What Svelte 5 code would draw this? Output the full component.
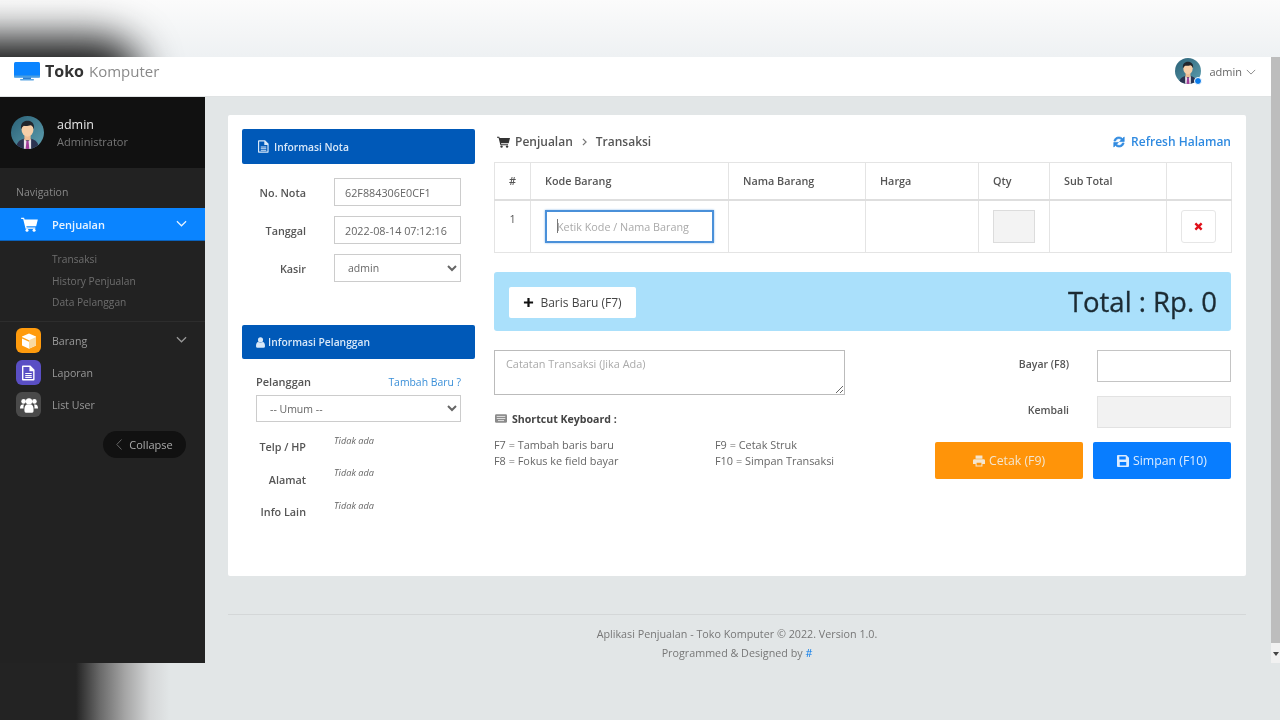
<script>
	const subMenu = ['Transaksi', 'History Penjualan', 'Data Pelanggan'];
	const shortcutsLeft = ['F7 = Tambah baris baru', 'F8 = Fokus ke field bayar'];
	const shortcutsRight = ['F9 = Cetak Struk', 'F10 = Simpan Transaksi'];
	const columns = ['#', 'Kode Barang', 'Nama Barang', 'Harga', 'Qty', 'Sub Total', ''];
	const customerInfo = ['Telp / HP', 'Alamat', 'Info Lain'];
</script>

{#snippet avatar(cls)}
	<svg class={cls} viewBox="0 0 32 32">
		<defs>
			<linearGradient id="av-{cls}" x1="0" y1="0" x2="1" y2="1">
				<stop offset="0" stop-color="#2a6076" />
				<stop offset="1" stop-color="#5fa0b0" />
			</linearGradient>
			<clipPath id="clip-{cls}"><circle cx="16" cy="16" r="16" /></clipPath>
		</defs>
		<circle cx="16" cy="16" r="16" fill="url(#av-{cls})" />
		<g clip-path="url(#clip-{cls})">
			<path d="M5 32c0-6 3-9 7.500-10h7c4.500 1 7.500 4 7.500 10z" fill="#2b3350" />
			<path d="M12.500 22l3.500 3 3.500-3v10h-7z" fill="#e9e4ea" />
			<path d="M15 24h2l.8 8h-3.600z" fill="#a13d9a" />
			<rect x="13" y="17" width="6" height="6.500" fill="#eebd95" />
			<ellipse cx="16" cy="13" rx="5.800" ry="7" fill="#f7cfa8" />
			<path d="M9.800 13c-.9-6 2.200-8.500 6.200-8.500s7.100 2.500 6.200 8.500c-.5-2-1.500-3.500-3.200-4-2 .8-5.500.8-6.500.5-1.200.8-2.200 2-2.700 3.500z" fill="#22262c" />
		</g>
	</svg>
{/snippet}

{#snippet cart(cls)}
	<svg class={cls} viewBox="0 0 20 18" fill="currentColor">
		<path d="M0 1h3.500l.6 2H20l-2 8H6.200l.4 1.500H17V14H5.300L2.400 2.500H0z" />
		<circle cx="7" cy="16" r="1.800" />
		<circle cx="15.500" cy="16" r="1.800" />
	</svg>
{/snippet}

{#snippet fileIcon(cls)}
	<svg class={cls} viewBox="0 0 14 16" fill="currentColor">
		<path fill-rule="evenodd" d="M1 0h8l4.500 4.500V15a1 1 0 0 1-1 1H1a1 1 0 0 1-1-1V1a1 1 0 0 1 1-1zm.5 1.500v13h10.500V6H8V1.500zM3.500 8h7v1.200h-7zm0 2.200h7v1.200h-7zm0 2.200h7v1.100h-7z" />
	</svg>
{/snippet}

<div class="page">
	<div class="top-shade"></div>

	<div class="window">
		<div class="viewport">
			<header class="topbar">
				<div class="brand">
					<svg class="monitor" viewBox="0 0 26 19">
						<rect x="0" y="0" width="26" height="15.500" rx="1.500" fill="#0a84ff" />
						<rect x="0" y="13.500" width="26" height="2" fill="#4a9ee0" />
						<rect x="9" y="15.500" width="8" height="2" fill="#2b7fd0" />
						<rect x="6" y="17" width="14" height="1.500" rx=".7" fill="#5aa5e4" />
					</svg>
					<span class="brand-bold">Toko</span>
					<span class="brand-light">Komputer</span>
				</div>
				<div class="account">
					<span class="account-pic">
						{@render avatar('avatar-sm')}
						<span class="dot"></span>
					</span>
					<span class="account-name">admin</span>
					<svg class="chev-top" viewBox="0 0 12 7"><path d="M1 1l5 5 5-5" /></svg>
				</div>
			</header>

			<div class="body">
				<aside class="sidebar">
					<div class="profile">
						{@render avatar('avatar-lg')}
						<div class="profile-text">
							<div class="profile-name">admin</div>
							<div class="profile-role">Administrator</div>
						</div>
					</div>

					<div class="nav-title">Navigation</div>

					<div class="nav-active">
						{@render cart('nav-cart')}
						<span>Penjualan</span>
						<svg class="chev" viewBox="0 0 12 7"><path d="M1 1l5 5 5-5" /></svg>
					</div>

					<ul class="sub-menu">
						{#each subMenu as item}
							<li>{item}</li>
						{/each}
					</ul>

					<div class="nav-list">
						<div class="nav-item">
							<span class="tile orange">
								<svg viewBox="0 0 18 18">
									<path d="M9 1.500l7 3v9l-7 3.200-7-3.200v-9z" fill="#fff" />
									<path d="M9 8.200l7-3.200v8.500l-7 3.200z" fill="#f9d9a0" />
									<path d="M9 8.200L2 5v1.500l7 3.200z" fill="#ffa31a" />
								</svg>
							</span>
							<span>Barang</span>
							<svg class="chev" viewBox="0 0 12 7"><path d="M1 1l5 5 5-5" /></svg>
						</div>
						<div class="nav-item">
							<span class="tile purple">{@render fileIcon('tile-file')}</span>
							<span>Laporan</span>
						</div>
						<div class="nav-item">
							<span class="tile grey">
								<svg viewBox="0 0 20 18" fill="#fff">
									<circle cx="4" cy="5" r="2.600" />
									<circle cx="16" cy="5" r="2.600" />
									<circle cx="10" cy="5" r="3.500" />
									<path d="M0 13c0-3 1-4.500 3-4.500h1.500C3.800 10 3.800 11.500 4 13zM20 13c0-3-1-4.500-3-4.500h-1.500c.7 1.500.7 3 .5 4.500z" />
									<path d="M5 16c-.5-5 1-7.500 3-7.500h4c2 0 3.500 2.500 3 7.500a1.500 1.500 0 0 1-1.500 1.500h-7A1.500 1.500 0 0 1 5 16z" />
								</svg>
							</span>
							<span>List User</span>
						</div>
					</div>

					<div class="collapse-row">
						<div class="collapse">
							<svg viewBox="0 0 6 11"><path d="M5.500 .5L.8 5.500l4.700 5" /></svg>
							Collapse
						</div>
					</div>
				</aside>

				<main class="content">
					<section class="card">
						<div class="col-left">
							<div class="panel-head">
								{@render fileIcon('head-file')}
								<span>Informasi Nota</span>
							</div>
							<div class="nota-form">
								<div class="form-row">
									<span class="form-label">No. Nota</span>
									<input class="field" value="62F884306E0CF1" readonly />
								</div>
								<div class="form-row">
									<span class="form-label">Tanggal</span>
									<input class="field" value="2022-08-14 07:12:16" readonly />
								</div>
								<div class="form-row">
									<span class="form-label">Kasir</span>
									<select class="field select"><option>admin</option></select>
								</div>
							</div>

							<div class="panel-head second">
								<svg class="head-user" viewBox="0 0 12 14" fill="currentColor">
									<circle cx="6" cy="3.500" r="3.400" />
									<path d="M0 12c0-3.500 1-5.500 3-5.700 1.800 1.200 4.200 1.200 6 0 2 .2 3 2.200 3 5.700a2 2 0 0 1-2 2H2a2 2 0 0 1-2-2z" />
								</svg>
								<span>Informasi Pelanggan</span>
							</div>
							<div class="customer">
								<div class="customer-top">
									<span class="customer-label">Pelanggan</span>
									<span class="link">Tambah Baru ?</span>
								</div>
								<select class="field select wide"><option>-- Umum --</option></select>
							</div>
							<div class="info-list">
								{#each customerInfo as label}
									<div class="info-row">
										<span class="form-label">{label}</span>
										<em>Tidak ada</em>
									</div>
								{/each}
							</div>
						</div>

						<div class="col-right">
							<div class="crumbs">
								{@render cart('crumb-cart')}
								<span>Penjualan</span>
								<svg class="crumb-sep" viewBox="0 0 6 10"><path d="M1 1l4 4-4 4" /></svg>
								<span>Transaksi</span>
								<span class="refresh">
									<svg viewBox="0 0 14 14" fill="currentColor">
										<path d="M7 2a5 5 0 0 1 3.600 1.500L12.200 2v4.600H7.600l1.800-1.800A3.300 3.300 0 0 0 3.600 6H1.900A5.100 5.100 0 0 1 7 2zM7 12a5 5 0 0 1-3.600-1.500L1.800 12V7.400h4.600L4.600 9.200A3.300 3.300 0 0 0 10.400 8h1.700A5.100 5.100 0 0 1 7 12z" />
									</svg>
									Refresh Halaman
								</span>
							</div>

							<table class="items">
								<colgroup>
									<col class="c1" /><col class="c2" /><col class="c3" /><col class="c4" /><col class="c5" /><col class="c6" /><col class="c7" />
								</colgroup>
								<thead>
									<tr>
										{#each columns as col}
											<th>{col}</th>
										{/each}
									</tr>
								</thead>
								<tbody>
									<tr>
										<td class="num">1</td>
										<td><input class="code-input" placeholder="Ketik Kode / Nama Barang" /></td>
										<td></td>
										<td></td>
										<td><div class="qty"></div></td>
										<td></td>
										<td>
											<div class="del">
												<svg viewBox="0 0 10 10"><path d="M1.500 1.500l7 7M8.500 1.500l-7 7" /></svg>
											</div>
										</td>
									</tr>
								</tbody>
							</table>

							<div class="total-bar">
								<div class="add-row">
									<svg viewBox="0 0 12 12"><path d="M6 1v10M1 6h10" /></svg>
									Baris Baru (F7)
								</div>
								<div class="total">Total : Rp. 0</div>
							</div>

							<div class="bottom">
								<div class="notes">
									<textarea placeholder="Catatan Transaksi (Jika Ada)"></textarea>
									<div class="shortcut-title">
										<svg viewBox="0 0 14 10">
											<rect width="14" height="10" rx="1.500" fill="#8a8a8a" />
											<rect x="2" y="2" width="10" height="1.200" fill="#ddd" />
											<rect x="2" y="4.400" width="10" height="1.200" fill="#ddd" />
											<rect x="3.500" y="6.800" width="7" height="1.200" fill="#ddd" />
										</svg>
										Shortcut Keyboard :
									</div>
									<div class="shortcut-grid">
										<div>
											{#each shortcutsLeft as line}
												<div>{line}</div>
											{/each}
										</div>
										<div>
											{#each shortcutsRight as line}
												<div>{line}</div>
											{/each}
										</div>
									</div>
								</div>

								<div class="pay">
									<div class="pay-row">
										<span>Bayar (F8)</span>
										<input class="pay-input" />
									</div>
									<div class="pay-row">
										<span>Kembali</span>
										<input class="pay-input off" disabled />
									</div>
									<div class="actions">
										<div class="btn orange-btn">
											<svg viewBox="0 0 14 13" fill="currentColor">
												<path fill-rule="evenodd" d="M3 0h8v4H3zM1.500 4.500h11A1.500 1.500 0 0 1 14 6v4h-3v3H3v-3H0V6a1.500 1.500 0 0 1 1.500-1.500zM4.200 8.500v3.300h5.600V8.500z" />
											</svg>
											Cetak (F9)
										</div>
										<div class="btn blue-btn">
											<svg viewBox="0 0 13 13" fill="currentColor">
												<path fill-rule="evenodd" d="M1 0h9l3 3v9a1 1 0 0 1-1 1H1a1 1 0 0 1-1-1V1a1 1 0 0 1 1-1zm1.500 1.500v3.500h7V1.500zM3 7.500v4h7v-4z" />
											</svg>
											Simpan (F10)
										</div>
									</div>
								</div>
							</div>
						</div>
					</section>

					<footer class="foot">
						<div>Aplikasi Penjualan - Toko Komputer © 2022. Version 1.0.</div>
						<div>Programmed &amp; Designed by <span class="hash">#</span></div>
					</footer>
				</main>
			</div>
		</div>

		<div class="scrollbar">
			<div class="thumb"></div>
			<div class="arrow"></div>
		</div>
	</div>

	<div class="bottom-shade"></div>
</div>

<style>
	:global(body) {
		margin: 0;
		background: #e2e6e7;
	}

	.page {
		width: 1280px;
		height: 720px;
		overflow: hidden;
		display: flex;
		flex-direction: column;
		background: #e2e6e7;
		font-family: 'Open Sans', 'Noto Sans', sans-serif;
		color: #444;
		filter: blur(0.45px);
	}

	.top-shade {
		height: 57px;
		flex: none;
		position: relative;
		overflow: hidden;
		background: linear-gradient(#fbfbfb, #eef1f3);
	}

	/* blurred dark blob bleeding in from the left */
	.top-shade::before {
		content: '';
		position: absolute;
		left: -100px;
		top: 38px;
		width: 240px;
		height: 70px;
		background: #111;
		border-radius: 0 40px 0 0;
		filter: blur(20px);
	}

	.window {
		display: flex;
		height: 606px;
		flex: none;
	}

	.viewport {
		flex: 1;
		display: flex;
		flex-direction: column;
		min-width: 0;
	}

	.scrollbar {
		width: 9px;
		flex: none;
		display: flex;
		flex-direction: column;
		background: #f1f1f1;
	}

	.thumb {
		flex: 1;
		background: #bdbdbd;
	}

	.arrow {
		height: 20px;
		flex: none;
		position: relative;
	}

	.arrow::after {
		content: '';
		position: absolute;
		left: 2px;
		top: 9px;
		border: 3px solid transparent;
		border-top: 4px solid #444;
	}

	.bottom-shade {
		flex: 1;
		background: linear-gradient(90deg, #232323 0, #232323 76px, #6a6a6a 100px, #a5a5a5 125px, #d4d6d7 150px, #e2e6e7 170px);
	}

	/* top bar */
	.topbar {
		height: 40px;
		flex: none;
		background: #fff;
		display: flex;
		justify-content: space-between;
		align-items: flex-start;
		border-bottom: 1px solid #e0e3e4;
		box-sizing: border-box;
		padding: 0 15px 0 14px;
	}

	.brand {
		display: flex;
		align-items: center;
		height: 28px;
	}

	.monitor {
		width: 26px;
		height: 19px;
		margin-right: 5px;
	}

	.brand-bold {
		font-weight: 700;
		font-size: 16px;
		color: #333;
		margin-right: 5px;
	}

	.brand-light {
		font-size: 15px;
		color: #8a8a8a;
	}

	.account {
		display: flex;
		align-items: center;
		height: 28px;
		font-size: 11px;
		color: #666;
	}

	.account-pic {
		position: relative;
		width: 26px;
		height: 26px;
		margin-right: 8px;
	}

	:global(.avatar-sm) {
		width: 26px;
		height: 26px;
		display: block;
	}

	.dot {
		position: absolute;
		right: 0;
		bottom: 0;
		width: 6px;
		height: 6px;
		border-radius: 50%;
		background: #0a7bea;
		border: 1px solid #fff;
		box-sizing: content-box;
		margin: 0 -1px -1px 0;
	}

	.chev-top {
		width: 10px;
		height: 6px;
		margin: 2px 0 0 4px;
		fill: none;
		stroke: #777;
		stroke-width: 1;
	}

	.body {
		flex: 1;
		display: flex;
		min-height: 0;
	}

	/* sidebar */
	.sidebar {
		width: 205px;
		flex: none;
		background: #222;
		color: #aaa;
		font-size: 11px;
	}

	.profile {
		height: 71px;
		background: #111;
		display: flex;
		align-items: center;
		padding: 0 0 0 11px;
		box-sizing: border-box;
	}

	:global(.avatar-lg) {
		width: 33px;
		height: 33px;
		margin-right: 13px;
		margin-top: -1px;
	}

	.profile-name {
		color: #e6e6e6;
		font-size: 12.500px;
		font-weight: 500;
		line-height: 17px;
	}

	.profile-role {
		color: #777;
		font-size: 11px;
		line-height: 17px;
	}

	.nav-title {
		height: 40px;
		line-height: 48px;
		padding-left: 16px;
		font-size: 10.500px;
		color: #888;
	}

	.nav-active {
		height: 33px;
		background: #0a84ff;
		color: #e8f3ff;
		display: flex;
		align-items: center;
		padding: 0 18px 0 21px;
		font-size: 11px;
		font-weight: 600;
		border-bottom: 1px solid #0a62bd;
		box-sizing: border-box;
	}

	.nav-active span,
	.nav-item span:not(.tile) {
		flex: 1;
	}

	:global(.nav-cart) {
		width: 17px;
		height: 15px;
		margin-right: 14px;
		color: #fff;
	}

	.chev {
		width: 11px;
		height: 7px;
		fill: none;
		stroke: currentColor;
		stroke-width: 1.300;
		margin-top: -3px;
	}

	.nav-active .chev {
		margin-top: -1px;
	}

	.sub-menu {
		list-style: none;
		margin: 0;
		padding: 8px 0 8px 52px;
		font-size: 10.200px;
		line-height: 21.500px;
		color: #6e6e6e;
		border-bottom: 1px solid #2d2d2d;
		height: 81px;
		box-sizing: border-box;
	}

	.nav-list {
		padding: 6px 18px 0 16px;
		display: flex;
		flex-direction: column;
		gap: 7px;
	}

	.nav-item {
		display: flex;
		align-items: center;
		height: 25px;
		color: #999;
		font-size: 10.600px;
	}

	.tile {
		width: 25px;
		height: 25px;
		border-radius: 6px;
		margin-right: 11px;
		display: flex;
		align-items: center;
		justify-content: center;
	}

	.tile svg {
		width: 18px;
		height: 18px;
	}

	:global(.tile-file) {
		width: 13px !important;
		height: 16px !important;
		color: #fff;
	}

	.orange {
		background: #ff9b0d;
	}

	.purple {
		background: #5a4fc4;
	}

	.grey {
		background: #4a4a4a;
	}

	.collapse-row {
		display: flex;
		justify-content: flex-end;
		padding: 14px 19px 0 0;
	}

	.collapse {
		width: 83px;
		height: 27px;
		border-radius: 14px;
		background: #111;
		color: #aaa;
		font-size: 11px;
		display: flex;
		align-items: center;
		justify-content: center;
		gap: 7px;
		box-sizing: border-box;
	}

	.collapse svg {
		width: 6px;
		height: 11px;
		fill: none;
		stroke: #666;
		stroke-width: 1;
	}

	/* main content */
	.content {
		flex: 1;
		min-width: 0;
		padding: 18px 25px 0 23px;
	}

	.card {
		height: 461px;
		background: #fff;
		border-radius: 2px;
		display: flex;
		padding: 14px 15px 0 14px;
		box-sizing: border-box;
		gap: 19px;
	}

	.col-left {
		width: 233px;
		flex: none;
		font-size: 11px;
	}

	.panel-head {
		height: 35px;
		background: #0059b8;
		border-radius: 2px;
		color: #d8e8f8;
		font-size: 10.300px;
		font-weight: 600;
		display: flex;
		align-items: center;
		padding-left: 16px;
		gap: 5px;
	}

	.panel-head.second {
		height: 34px;
		margin-top: 43px;
		padding-left: 14px;
		gap: 3px;
	}

	:global(.head-file) {
		width: 11px;
		height: 13px;
	}

	.head-user {
		width: 9px;
		height: 11px;
	}

	.nota-form {
		margin-top: 14px;
		display: flex;
		flex-direction: column;
		gap: 10px;
	}

	.form-row {
		display: flex;
		align-items: center;
	}

	.form-label {
		width: 64px;
		text-align: right;
		font-weight: 600;
		font-size: 10.800px;
		color: #555;
		flex: none;
	}

	.field {
		margin-left: 28px;
		width: 127px;
		height: 28px;
		border: 1px solid #ccc;
		background: #fff;
		box-sizing: border-box;
		padding: 0 10px;
		font: 10.800px 'Open Sans', sans-serif;
		color: #666;
		border-radius: 0;
		outline: none;
	}

	.select {
		padding: 0 0 0 9px;
		font-size: 10.500px;
	}

	.select.wide {
		margin-left: 14px;
		width: 205px;
		height: 27px;
		padding-left: 9px;
		display: block;
	}

	.customer {
		margin-top: 12px;
	}

	.customer-top {
		display: flex;
		justify-content: space-between;
		padding: 0 14px;
		height: 21px;
		margin-bottom: 3px;
		align-items: center;
	}

	.customer-label {
		font-weight: 600;
		color: #555;
	}

	.link {
		color: #3a8fd8;
		font-size: 10.400px;
	}

	.info-list {
		margin-top: 10px;
		display: flex;
		flex-direction: column;
		gap: 10.500px;
	}

	.info-row {
		display: flex;
		height: 22px;
		align-items: flex-end;
	}

	.info-row em {
		margin-left: 28px;
		padding-top: 1.500px;
		font-size: 9.200px;
		color: #666;
		align-self: flex-start;
	}

	.col-right {
		flex: 1;
		min-width: 0;
	}

	.crumbs {
		display: flex;
		align-items: center;
		height: 25px;
		font-size: 12px;
		font-weight: 600;
		color: #555;
		padding-left: 3px;
	}

	:global(.crumb-cart) {
		width: 13px;
		height: 12px;
		color: #333;
		margin-right: 5px;
	}

	.crumb-sep {
		width: 5px;
		height: 8px;
		margin: 0 9px;
		fill: none;
		stroke: #777;
		stroke-width: 1.500;
	}

	.refresh {
		margin-left: auto;
		color: #2f8ae0;
		display: flex;
		align-items: center;
		gap: 5px;
	}

	.refresh svg {
		width: 14px;
		height: 14px;
		margin-left: -2px;
		stroke: currentColor;
		stroke-width: 0.7;
	}

	.items {
		width: 737px;
		margin-top: 8px;
		border-collapse: collapse;
		table-layout: fixed;
		font-size: 10.800px;
		color: #555;
	}

	.c1 { width: 36px; }
	.c2 { width: 198px; }
	.c3 { width: 137px; }
	.c4 { width: 113px; }
	.c5 { width: 71px; }
	.c6 { width: 117px; }
	.c7 { width: 65px; }

	th {
		height: 37px;
		border: 1px solid #e4e4e4;
		border-bottom: 2px solid #dedede;
		text-align: left;
		padding: 0 0 0 14px;
		font-weight: 600;
		box-sizing: border-box;
	}

	th:first-child {
		text-align: center;
		padding: 0;
	}

	td {
		height: 53px;
		border: 1px solid #e4e4e4;
		padding: 0 0 0 14px;
		box-sizing: border-box;
	}

	td.num {
		padding: 0;
		text-align: center;
		vertical-align: top;
		padding-top: 10px;
	}

	.code-input {
		width: 169px;
		height: 33px;
		box-sizing: border-box;
		border: 2px solid #4a90d9;
		box-shadow: 0 0 2px #8bbbe8;
		padding: 0 10px;
		font: 10.800px 'Open Sans', sans-serif;
		outline: none;
		display: block;
		background: linear-gradient(#777, #777) 10px center / 1px 14px no-repeat #fff;
	}

	.code-input::placeholder,
	textarea::placeholder {
		color: #aaa;
	}

	.qty {
		width: 42px;
		height: 33px;
		background: #f3f3f3;
		border: 1px solid #dcdcdc;
		box-sizing: border-box;
	}

	.del {
		width: 35px;
		height: 33px;
		border: 1px solid #e6e6e6;
		border-radius: 3px;
		box-sizing: border-box;
		display: flex;
		align-items: center;
		justify-content: center;
	}

	.del svg {
		width: 9px;
		height: 9px;
		stroke: #e0101a;
		stroke-width: 2.600;
	}

	.total-bar {
		margin-top: 19px;
		height: 59px;
		background: #aae0fb;
		border-radius: 3px;
		display: flex;
		align-items: center;
		justify-content: space-between;
		padding: 0 14px 0 15px;
	}

	.add-row {
		width: 127px;
		height: 31px;
		margin-top: 1px;
		background: #fff;
		border-radius: 2px;
		display: flex;
		align-items: center;
		justify-content: center;
		gap: 6px;
		font-size: 12px;
		color: #444;
		box-sizing: border-box;
	}

	.add-row svg {
		width: 11px;
		height: 11px;
		stroke: #111;
		stroke-width: 2.400;
	}

	.total {
		font-size: 27.500px;
		color: #1c2b33;
		font-weight: 400;
		-webkit-text-stroke: 0.3px #1c2b33;
	}

	.bottom {
		margin-top: 19px;
		display: flex;
		justify-content: space-between;
	}

	.notes {
		width: 351px;
		font-size: 10.900px;
		color: #666;
	}

	textarea {
		width: 351px;
		height: 45px;
		box-sizing: border-box;
		border: 1px solid #bbb;
		padding: 5px 11px;
		font: 10.900px 'Open Sans', sans-serif;
		display: block;
		outline: none;
		border-radius: 0;
	}

	.shortcut-title {
		margin-top: 16px;
		font-weight: 700;
		font-size: 10.600px;
		color: #444;
		display: flex;
		align-items: center;
		gap: 5px;
		height: 15px;
		padding-left: 1px;
	}

	.shortcut-title svg {
		width: 12px;
		height: 9px;
	}

	.shortcut-grid {
		margin-top: 11px;
		display: grid;
		grid-template-columns: 221px 1fr;
		line-height: 16px;
		white-space: nowrap;
	}

	.pay {
		width: 296px;
		font-size: 10.500px;
		font-weight: 600;
		color: #555;
	}

	.pay-row {
		display: flex;
		align-items: center;
		justify-content: flex-end;
		margin-bottom: 14px;
		padding-bottom: 0;
	}

	.pay-row span {
		margin-right: 28px;
		margin-top: -4px;
	}

	.pay-input {
		width: 134px;
		height: 32px;
		box-sizing: border-box;
		border: 1px solid #c4c4c4;
		outline: none;
		background: #fff;
		border-radius: 0;
	}

	.pay-input.off {
		background: #f2f2f2;
		border-color: #e2e2e2;
	}

	.actions {
		display: flex;
		gap: 10px;
	}

	.btn {
		height: 37px;
		border-radius: 2px;
		color: #f4e6d0;
		font-size: 12.300px;
		font-weight: 400;
		display: flex;
		align-items: center;
		justify-content: center;
		gap: 4px;
	}

	.btn svg {
		width: 12px;
		height: 12px;
	}

	.orange-btn {
		width: 148px;
		background: #ff9409;
	}

	.blue-btn {
		width: 138px;
		background: #087dff;
		color: #dcecff;
	}

	.foot {
		margin-top: 38px;
		border-top: 1px solid #d4d7d8;
		padding-top: 10px;
		text-align: center;
		font-size: 10.750px;
		line-height: 19px;
		color: #777;
	}

	.hash {
		color: #0a7bea;
	}
</style>
